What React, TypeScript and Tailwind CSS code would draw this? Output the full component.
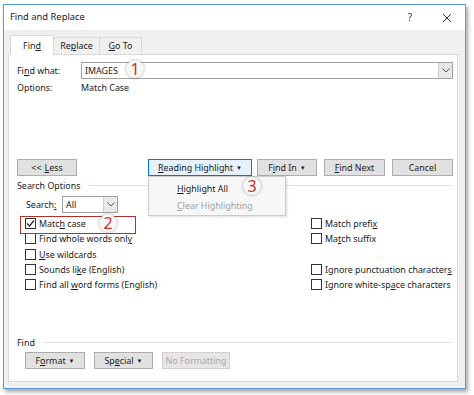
import { ReactNode } from 'react';

const font = { fontFamily: '"Noto Sans", "Open Sans", Arial, sans-serif' };

function Check({ checked, children }: { checked?: boolean; children: ReactNode }) {
  return (
    <div className="flex items-center h-[15.3px]">
      <span className="w-[11px] h-[11px] border border-[#333] bg-white flex items-center justify-center shrink-0">
        {checked && (
          <svg width="9" height="9" viewBox="0 0 9 9">
            <path d="M1 4.5 L3.5 7 L8 1.5" fill="none" stroke="#222" strokeWidth="1.2" />
          </svg>
        )}
      </span>
      <span className="ml-[3px] text-[#1a1a1a]">{children}</span>
    </div>
  );
}

function Btn({ children, w, hot, disabled }: { children: ReactNode; w: string; hot?: boolean; disabled?: boolean }) {
  return (
    <div
      className={`h-[17px] flex items-center justify-center border ${w} ${
        hot
          ? 'bg-[#e5f1fb] border-[#0078d7] text-[#1a1a1a]'
          : disabled
          ? 'bg-[#e6e6e6] border-[#d0d0d0] text-[#a8a8a8]'
          : 'bg-[#e1e1e1] border-[#adadad] text-[#1a1a1a]'
      }`}
    >
      {children}
    </div>
  );
}

const Caret = () => <span className="ml-[3px] text-[6px] leading-none">▼</span>;

function Badge({ n, className }: { n: string; className: string }) {
  return (
    <div
      className={`absolute w-[18px] h-[18px] rounded-full bg-[#f7f7f7] shadow-[0_0_3px_rgba(0,0,0,0.35)] flex items-center justify-center text-[16px] text-[#c0392b] leading-none ${className}`}
    >
      {n}
    </div>
  );
}

function Chevron() {
  return (
    <svg width="8" height="5" viewBox="0 0 8 5">
      <path d="M0.5 0.5 L4 4 L7.5 0.5" fill="none" stroke="#555" strokeWidth="1" />
    </svg>
  );
}

export default function App() {
  return (
    <div className="w-[474px] h-[395px] bg-white overflow-hidden whitespace-nowrap text-[8.9px]" style={font}>
      <div className="ml-[3px] mt-[4px] w-[463px] h-[385px] border border-[#5a9bd5] shadow-[2px_3px_4px_rgba(0,0,0,0.35)] flex flex-col">
        {/* Title bar */}
        <div className="h-[25px] bg-white flex items-center pl-[6px] pr-[13px] shrink-0">
          <span className="text-[9.4px] text-[#222]">Find and Replace</span>
          <span className="ml-auto text-[10px] text-[#333] mr-[30px]">?</span>
          <svg width="10" height="10" viewBox="0 0 10 10">
            <path d="M1 1 L9 9 M9 1 L1 9" stroke="#333" strokeWidth="1" />
          </svg>
        </div>

        <div className="flex-1 bg-[#f0f0f0] flex flex-col pl-[4px] pr-[7px] pb-[6px]">
          {/* Tabs */}
          <div className="flex items-end h-[24px] pl-[2px] text-[#1a1a1a]">
            <div className="h-[20px] w-[44px] bg-white border border-b-0 border-[#d9d9d9] flex items-center justify-center -mb-px relative z-10">
              Fin<u>d</u>
            </div>
            <div className="h-[17px] w-[46px] flex items-center justify-center border-t border-r border-[#d9d9d9]">
              Re<u>p</u>lace
            </div>
            <div className="h-[17px] w-[42px] flex items-center justify-center border-t border-r border-[#d9d9d9]">
              <u>G</u>o To
            </div>
          </div>

          {/* Panel */}
          <div className="flex-1 bg-white border border-[#d9d9d9] relative text-[#1a1a1a]">
            <div className="flex items-center mt-[7px] pl-[8px] pr-[4px]">
              <span className="w-[64px]">Fi<u>n</u>d what:</span>
              <div className="flex-1 h-[17px] border border-[#a0a0a0] flex items-center pl-[3px]">
                <span>IMAGES</span>
                <div className="ml-auto w-[14px] h-[15px] border-l border-[#cfcfcf] bg-[#e8e8e8] flex items-center justify-center">
                  <Chevron />
                </div>
              </div>
            </div>
            <div className="flex items-center pl-[8px] h-[15px] mt-[1px]">
              <span className="w-[64px]">Options:</span>
              <span>Match Case</span>
            </div>

            {/* Buttons */}
            <div className="flex items-center mt-[64px] pl-[8px]">
              <Btn w="w-[60px]">
                &lt;&lt; <u className="ml-[3px]">L</u>ess
              </Btn>
              <div className="ml-[71px]">
                <Btn w="w-[104px]" hot>
                  <u>R</u>eading Highlight<Caret />
                </Btn>
              </div>
              <div className="ml-[5px]">
                <Btn w="w-[60px]">
                  F<u>i</u>nd In<Caret />
                </Btn>
              </div>
              <div className="ml-[7px]">
                <Btn w="w-[61px]">
                  <u>F</u>ind Next
                </Btn>
              </div>
              <div className="ml-[7px]">
                <Btn w="w-[61px]">Cancel</Btn>
              </div>
            </div>

            {/* Search options */}
            <div className="flex items-center pl-[8px] pr-[4px] mt-[3px] h-[13px]">
              <span>Search Options</span>
              <div className="flex-1 ml-[8px] h-px bg-[#e3e3e3]" />
            </div>
            <div className="flex items-center pl-[17px] mt-[4px] h-[17px]">
              <span className="w-[36px]">
                Search<u>:</u>
              </span>
              <div className="w-[56px] h-[17px] border border-[#a0a0a0] flex items-center pl-[3px]">
                <span>All</span>
                <div className="ml-auto w-[14px] h-[15px] border-l border-[#cfcfcf] bg-[#e8e8e8] flex items-center justify-center">
                  <Chevron />
                </div>
              </div>
            </div>

            <div className="grid grid-cols-[286px_1fr] pl-[16px] mt-[3px]">
              <div className="flex flex-col">
                <Check checked>
                  Matc<u>h</u> case
                </Check>
                <Check>
                  Find whole words onl<u>y</u>
                </Check>
                <Check>
                  <u>U</u>se wildcards
                </Check>
                <Check>
                  Sounds li<u>k</u>e (English)
                </Check>
                <Check>
                  Find all <u>w</u>ord forms (English)
                </Check>
              </div>
              <div className="flex flex-col">
                <Check>
                  Match prefi<u>x</u>
                </Check>
                <Check>
                  Ma<u>t</u>ch suffix
                </Check>
                <div className="h-[15.3px]" />
                <Check>
                  Ignore punctuation character<u>s</u>
                </Check>
                <Check>
                  Ignore white-sp<u>a</u>ce characters
                </Check>
              </div>
            </div>

            {/* Find */}
            <div className="flex items-center pl-[8px] pr-[4px] mt-[44px] h-[13px]">
              <span>Find</span>
              <div className="flex-1 ml-[8px] h-px bg-[#e3e3e3]" />
            </div>
            <div className="flex items-center gap-[9px] pl-[16px] mt-[3px]">
              <Btn w="w-[60px]">
                F<u>o</u>rmat<Caret />
              </Btn>
              <Btn w="w-[59px]">
                Sp<u>e</u>cial<Caret />
              </Btn>
              <Btn w="w-[68px]" disabled>
                No Formatting
              </Btn>
            </div>

            {/* Dropdown menu overlay */}
            <div className="absolute left-[139px] top-[121px] w-[138px] h-[40px] bg-[#f7f7f7] border border-[#cccccc] shadow-[1px_1px_2px_rgba(0,0,0,0.15)] flex flex-col pl-[28px] pt-[3px]">
              <div className="h-[17px] flex items-center text-[#1a1a1a]">
                <u>H</u>ighlight All
              </div>
              <div className="h-[17px] flex items-center text-[#a0a0a0]">
                <u>C</u>lear Highlighting
              </div>
            </div>

            {/* Annotation */}
            <div className="absolute left-[11px] top-[161px] w-[116px] h-[18px] border-[1.5px] border-[#b2322b]" />
            <Badge n="1" className="left-[117px] top-[5px]" />
            <Badge n="2" className="left-[90px] top-[159px]" />
            <Badge n="3" className="left-[234px] top-[122px]" />
          </div>
        </div>
      </div>
    </div>
  );
}
